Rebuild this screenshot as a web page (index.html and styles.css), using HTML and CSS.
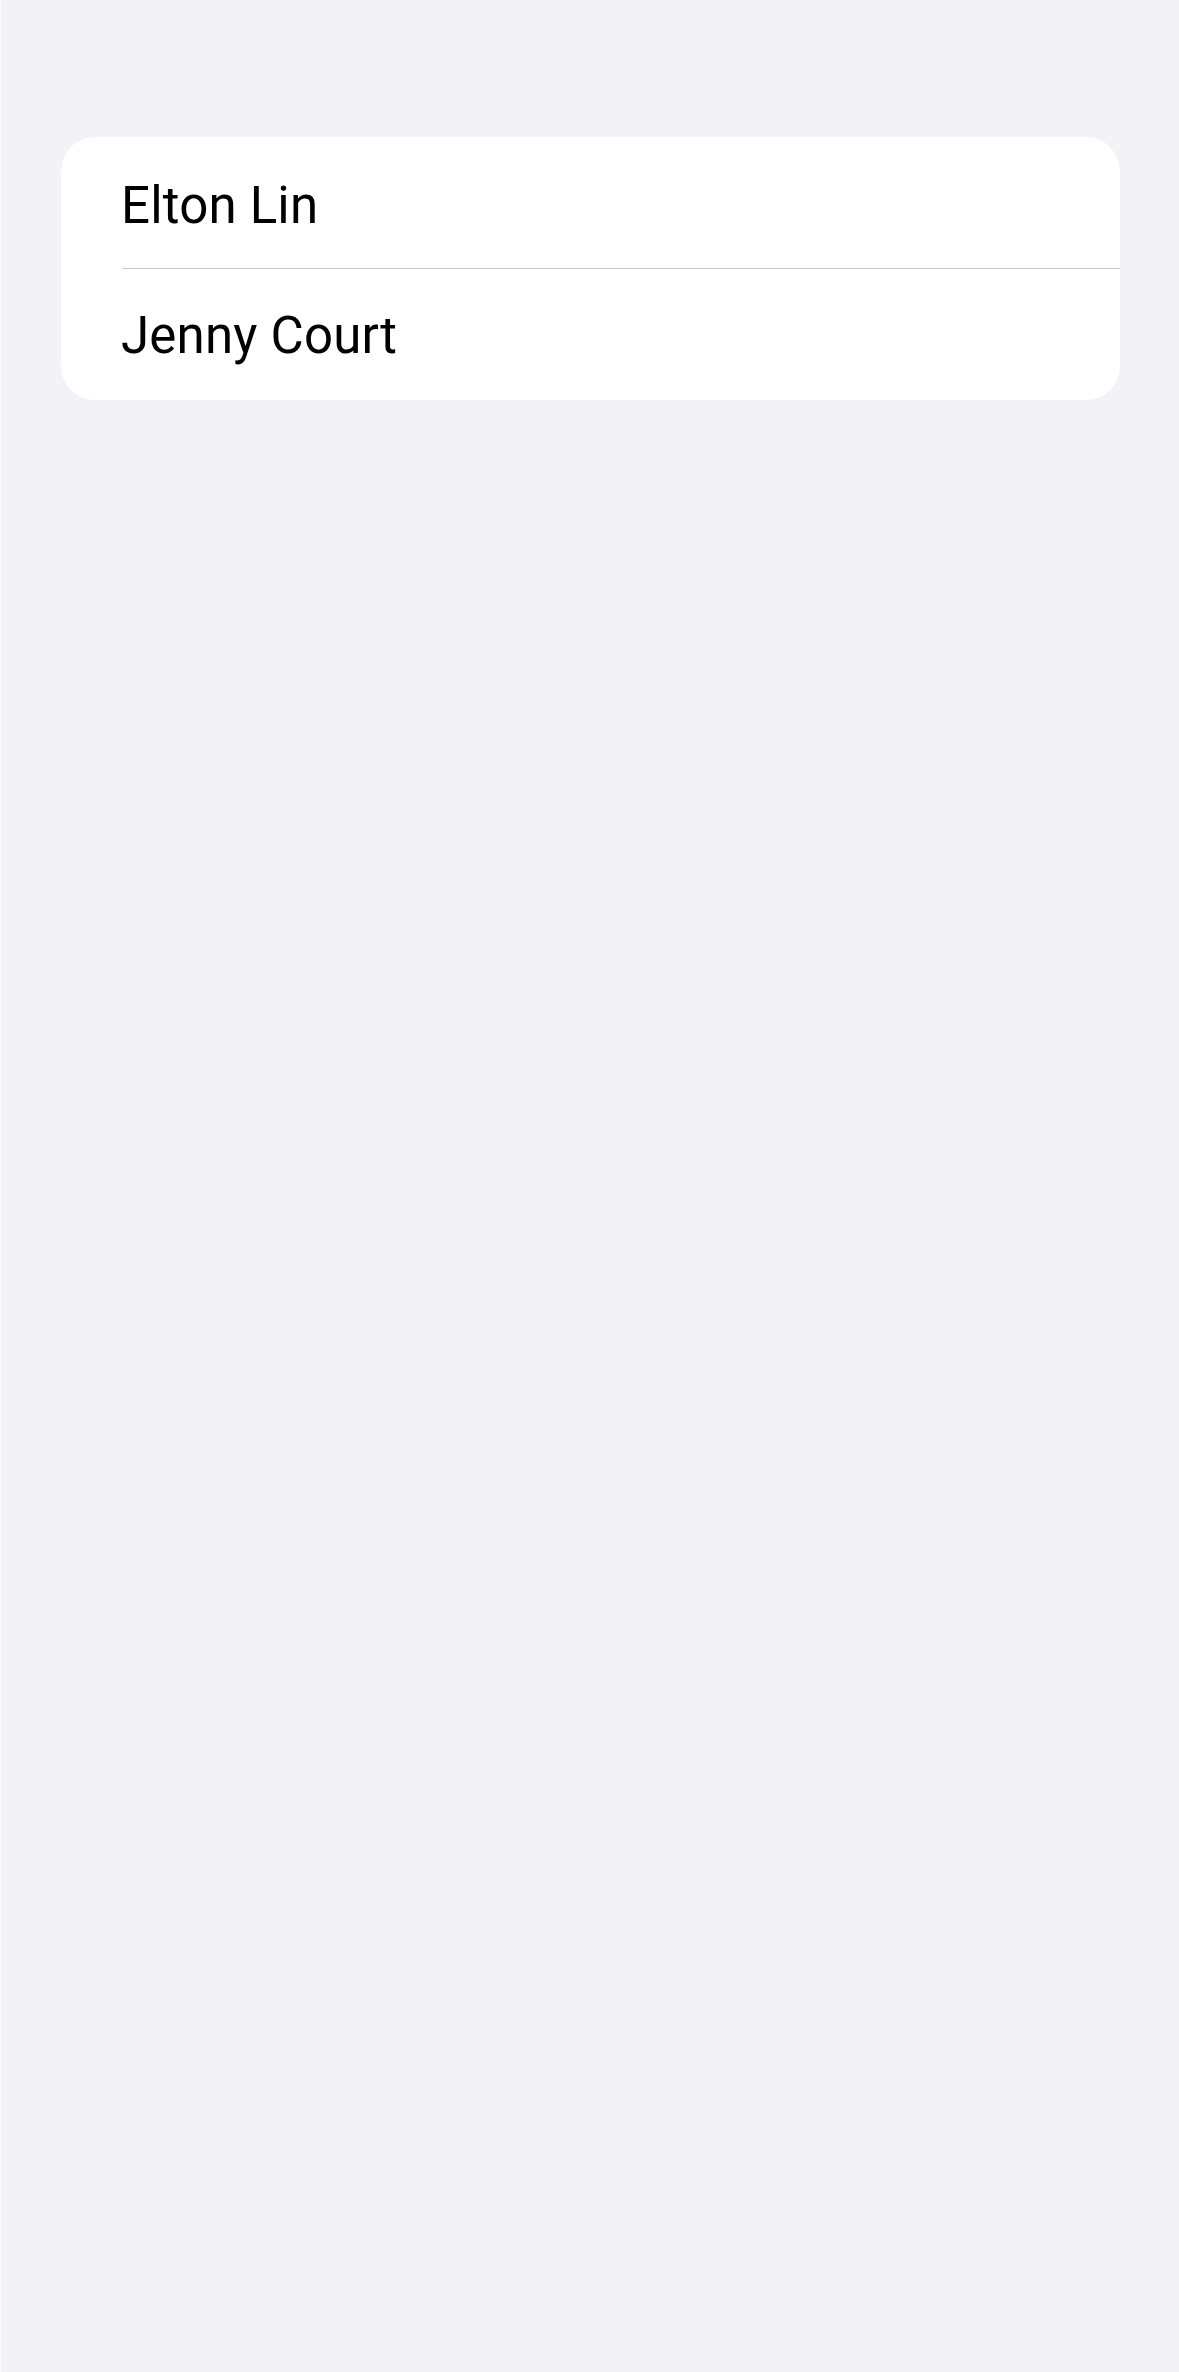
FILE: index.html
```html
<!DOCTYPE html>
<html>
<head>
<meta charset="utf-8">
<link rel="stylesheet" href="styles.css">
</head>
<body>
<main class="page">
  <ul class="list">
    <li class="row row-first"><span class="name">Elton Lin</span></li>
    <li class="row row-next"><span class="name">Jenny Court</span></li>
  </ul>
</main>
</body>
</html>
```

FILE: styles.css
```css
html, body {
  margin: 0;
  padding: 0;
  background: #f2f2f7;
}
body {
  min-height: 2372px;
  border-left: 1px solid #fbfbfd;
  box-sizing: border-box;
  font-family: Roboto, "Noto Sans", "Liberation Sans", sans-serif;
}
.page {
  padding: 137px 59px 0 60px;
}
.list {
  list-style: none;
  margin: 0;
  padding: 0 0 0 61px;
  background: #ffffff;
  border-radius: 34px;
  overflow: hidden;
}
.row {
  box-sizing: border-box;
  display: flex;
  align-items: center;
  font-size: 51px;
  color: #000;
  letter-spacing: 0.2px;
}
.row-first {
  height: 131px;
  padding-top: 5px;
}
.row-next {
  border-top: 1px solid #c6c6c8;
  height: 132px;
  padding-top: 1px;
}
.name {
  margin-left: -1px;
}
```
